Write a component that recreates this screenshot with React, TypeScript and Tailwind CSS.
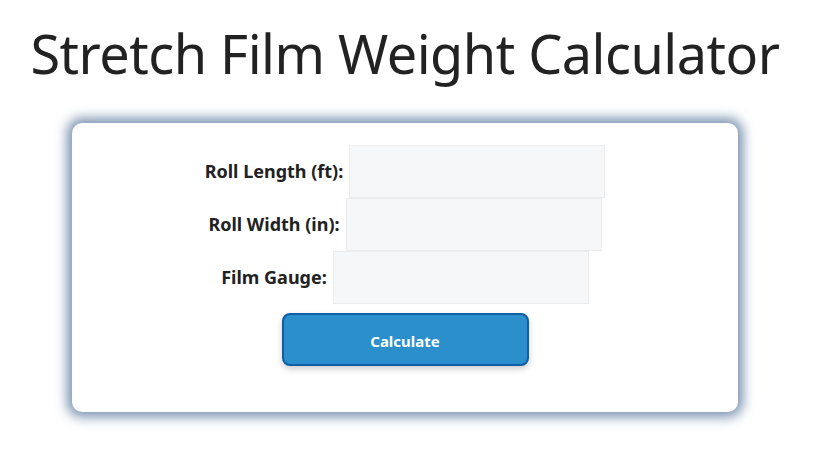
import { useState } from "react";

const fields = [
    { id: "length", label: "Roll Length (ft):" },
    { id: "width", label: "Roll Width (in):" },
    { id: "gauge", label: "Film Gauge:" },
];

export default function App() {
    const [values, setValues] = useState<Record<string, string>>({});

    return (
        <div className="min-h-screen bg-white font-['Noto_Sans',sans-serif] text-[#222]">
            <div className="w-[810px]">
                {/* title */}
                <h1 className="pt-[17px] text-center text-[54px] leading-[72px] font-normal tracking-[-0.5px]">
                    Stretch Film Weight Calculator
                </h1>

                {/* card */}
                <div className="mx-auto mt-[34px] w-[666px] rounded-[10px] bg-white pt-[22px] pb-[46px] shadow-[0_0_12px_5px_rgba(70,105,145,0.72)]">
                    <div className="flex flex-col items-center">
                        {fields.map((f) => (
                            <div key={f.id} className="flex items-center gap-[6px]">
                                <label htmlFor={f.id} className="text-[18px] font-bold">
                                    {f.label}
                                </label>
                                <input
                                    id={f.id}
                                    value={values[f.id] ?? ""}
                                    onChange={(e) => setValues({ ...values, [f.id]: e.target.value })}
                                    className="h-[53px] w-[256px] border border-[#ececec] bg-[#f6f7f8] outline-none"
                                />
                            </div>
                        ))}
                        <button className="mt-[9px] h-[53px] w-[247px] rounded-[8px] border-2 border-[#0d5ea6] bg-[#2b8fcb] pt-[3px] text-[15px] font-bold text-white shadow-[0_3px_6px_rgba(0,0,0,0.2)]">
                            Calculate
                        </button>
                    </div>
                </div>
            </div>
        </div>
    );
}
